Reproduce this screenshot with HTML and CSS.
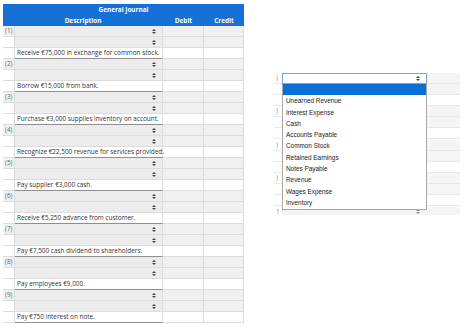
FILE: index.html
```html
<!DOCTYPE html>
<html lang="en">
<head>
  <meta charset="UTF-8" />
  <title>General Journal</title>
  <link rel="stylesheet" href="styles.css">
</head>
<body>

  <div class="journal">
    <div class="head">
      <div class="head-title">General Journal</div>
      <div class="head-cols"><span>Description</span><span>Debit</span><span>Credit</span></div>
    </div>

    <div class="entry">
      <div class="row pick first"><span class="num">(1)</span><span class="acct"><i class="arrows"></i></span><span class="amt"></span><span class="amt"></span></div>
      <div class="row pick"><span class="num"></span><span class="acct"><i class="arrows"></i></span><span class="amt"></span><span class="amt"></span></div>
      <div class="row memo"><span class="num"></span><span class="desc">Receive €75,000 in exchange for common stock.</span><span class="amt"></span><span class="amt"></span></div>
    </div>
    <div class="entry">
      <div class="row pick first"><span class="num">(2)</span><span class="acct"><i class="arrows"></i></span><span class="amt"></span><span class="amt"></span></div>
      <div class="row pick"><span class="num"></span><span class="acct"><i class="arrows"></i></span><span class="amt"></span><span class="amt"></span></div>
      <div class="row memo"><span class="num"></span><span class="desc">Borrow €15,000 from bank.</span><span class="amt"></span><span class="amt"></span></div>
    </div>
    <div class="entry">
      <div class="row pick first"><span class="num">(3)</span><span class="acct"><i class="arrows"></i></span><span class="amt"></span><span class="amt"></span></div>
      <div class="row pick"><span class="num"></span><span class="acct"><i class="arrows"></i></span><span class="amt"></span><span class="amt"></span></div>
      <div class="row memo"><span class="num"></span><span class="desc">Purchase €3,000 supplies inventory on account.</span><span class="amt"></span><span class="amt"></span></div>
    </div>
    <div class="entry">
      <div class="row pick first"><span class="num">(4)</span><span class="acct"><i class="arrows"></i></span><span class="amt"></span><span class="amt"></span></div>
      <div class="row pick"><span class="num"></span><span class="acct"><i class="arrows"></i></span><span class="amt"></span><span class="amt"></span></div>
      <div class="row memo"><span class="num"></span><span class="desc">Recognize €22,500 revenue for services provided.</span><span class="amt"></span><span class="amt"></span></div>
    </div>
    <div class="entry">
      <div class="row pick first"><span class="num">(5)</span><span class="acct"><i class="arrows"></i></span><span class="amt"></span><span class="amt"></span></div>
      <div class="row pick"><span class="num"></span><span class="acct"><i class="arrows"></i></span><span class="amt"></span><span class="amt"></span></div>
      <div class="row memo"><span class="num"></span><span class="desc">Pay supplier €3,000 cash.</span><span class="amt"></span><span class="amt"></span></div>
    </div>
    <div class="entry">
      <div class="row pick first"><span class="num">(6)</span><span class="acct"><i class="arrows"></i></span><span class="amt"></span><span class="amt"></span></div>
      <div class="row pick"><span class="num"></span><span class="acct"><i class="arrows"></i></span><span class="amt"></span><span class="amt"></span></div>
      <div class="row memo"><span class="num"></span><span class="desc">Receive €5,250 advance from customer.</span><span class="amt"></span><span class="amt"></span></div>
    </div>
    <div class="entry">
      <div class="row pick first"><span class="num">(7)</span><span class="acct"><i class="arrows"></i></span><span class="amt"></span><span class="amt"></span></div>
      <div class="row pick"><span class="num"></span><span class="acct"><i class="arrows"></i></span><span class="amt"></span><span class="amt"></span></div>
      <div class="row memo"><span class="num"></span><span class="desc">Pay €7,500 cash dividend to shareholders.</span><span class="amt"></span><span class="amt"></span></div>
    </div>
    <div class="entry">
      <div class="row pick first"><span class="num">(8)</span><span class="acct"><i class="arrows"></i></span><span class="amt"></span><span class="amt"></span></div>
      <div class="row pick"><span class="num"></span><span class="acct"><i class="arrows"></i></span><span class="amt"></span><span class="amt"></span></div>
      <div class="row memo"><span class="num"></span><span class="desc">Pay employees €9,000.</span><span class="amt"></span><span class="amt"></span></div>
    </div>
    <div class="entry">
      <div class="row pick first"><span class="num">(9)</span><span class="acct"><i class="arrows"></i></span><span class="amt"></span><span class="amt"></span></div>
      <div class="row pick"><span class="num"></span><span class="acct"><i class="arrows"></i></span><span class="amt"></span><span class="amt"></span></div>
      <div class="row memo"><span class="num"></span><span class="desc">Pay €750 interest on note.</span><span class="amt"></span><span class="amt"></span></div>
    </div>
  </div>

  <!-- faded copy of the journal behind the open account list -->
  <div class="ghost">
    <div class="entry">
      <div class="row pick"><span class="num">)</span><span class="acct"></span><span class="amt"></span></div>
      <div class="row pick"><span class="num"></span><span class="acct"></span><span class="amt"></span></div>
      <div class="row memo"><span class="num"></span><span class="desc"></span><span class="amt"></span></div>
    </div>
    <div class="entry">
      <div class="row pick"><span class="num">)</span><span class="acct"></span><span class="amt"></span></div>
      <div class="row pick"><span class="num"></span><span class="acct"></span><span class="amt"></span></div>
      <div class="row memo"><span class="num"></span><span class="desc"></span><span class="amt"></span></div>
    </div>
    <div class="entry">
      <div class="row pick"><span class="num">)</span><span class="acct"></span><span class="amt"></span></div>
      <div class="row pick"><span class="num"></span><span class="acct"></span><span class="amt"></span></div>
      <div class="row memo"><span class="num"></span><span class="desc"></span><span class="amt"></span></div>
    </div>
    <div class="entry">
      <div class="row pick"><span class="num">)</span><span class="acct"></span><span class="amt"></span></div>
      <div class="row pick"><span class="num"></span><span class="acct"></span><span class="amt"></span></div>
      <div class="row memo"><span class="num"></span><span class="desc"></span><span class="amt"></span></div>
    </div>
    <div class="entry">
      <div class="row pick"><span class="num">1</span><span class="acct"><i class="arrows"></i></span><span class="amt"></span></div>
    </div>
  </div>

  <div class="picker">
    <div class="picker-box"><i class="arrows"></i></div>
    <div class="picker-list">
      <div class="opt on"></div>
      <div class="opt">Unearned Revenue</div>
      <div class="opt">Interest Expense</div>
      <div class="opt">Cash</div>
      <div class="opt">Accounts Payable</div>
      <div class="opt">Common Stock</div>
      <div class="opt">Retained Earnings</div>
      <div class="opt">Notes Payable</div>
      <div class="opt">Revenue</div>
      <div class="opt">Wages Expense</div>
      <div class="opt">Inventory</div>
    </div>
  </div>

</body>
</html>
```

FILE: styles.css
```css
* {
  box-sizing: border-box;
}

body {
  margin: 0;
  padding: 4px 0 0 3px;
  background: #fff;
  font-family: 'Open Sans', 'DejaVu Sans', sans-serif;
  font-size: 6.4px;
  color: #333;
  position: relative;
  height: 332px;
  overflow: hidden;
}

.journal {
  width: 241px;
}

.head {
  background: #1570d8;
  color: #fff;
  font-weight: bold;
}

.head-title {
  height: 11px;
  line-height: 11px;
  text-align: center;
}

.head-cols {
  display: grid;
  grid-template-columns: 160px 41px 40px;
  height: 11px;
  line-height: 11px;
  text-align: center;
}

.row {
  display: grid;
  grid-template-columns: 12px 148px 41px 40px;
  height: 11px;
}

.row > span {
  border-right: 1px solid #dcdcdc;
  border-bottom: 1px solid #dcdcdc;
}

.num {
  padding-left: 2px;
  line-height: 10px;
  color: #666;
}

.row.first .num {
  background: #f2f2f2;
}

.acct {
  background: #ececec;
  display: flex;
  align-items: center;
  justify-content: flex-end;
  padding-right: 6px;
}

.pick .amt {
  background: #f0f0f0;
}

.memo .desc {
  padding-left: 2px;
  line-height: 10px;
  background: #fff;
  border-bottom: 1px solid #8f8f8f;
  white-space: nowrap;
}

.arrows {
  display: flex;
  flex-direction: column;
  gap: 1px;
}

.arrows::before,
.arrows::after {
  content: "";
  border-left: 2px solid transparent;
  border-right: 2px solid transparent;
}

.arrows::before {
  border-bottom: 2px solid #444;
}

.arrows::after {
  border-top: 2px solid #444;
}

/* faded journal behind the list */
.ghost {
  position: absolute;
  left: 274px;
  top: 73px;
  width: 186px;
  height: 142px;
  overflow: hidden;
  opacity: 0.6;
}

.ghost .entry {
  height: 33.4px;
}

.ghost .row {
  grid-template-columns: 8px 144px 34px;
}

.ghost .num {
  padding-left: 2px;
  color: #444;
  background: #fff;
}

.ghost .row > span {
  border-right: 0;
}

.picker {
  position: absolute;
  left: 282px;
  top: 73px;
  width: 145px;
  font-family: 'Liberation Sans', Arial, sans-serif;
}

.picker-box {
  height: 11px;
  border: 1px solid #78a6e4;
  background: #fff;
  display: flex;
  align-items: center;
  justify-content: flex-end;
  padding-right: 6px;
}

.picker-list {
  background: #fff;
  border: 1px solid #a8a8a8;
  border-top: none;
  padding-bottom: 1px;
}

.opt {
  height: 11.3px;
  line-height: 12.5px;
  padding-left: 3px;
  font-size: 6.4px;
  color: #222;
}

.opt.on {
  background: #0b6fd8;
}
```
